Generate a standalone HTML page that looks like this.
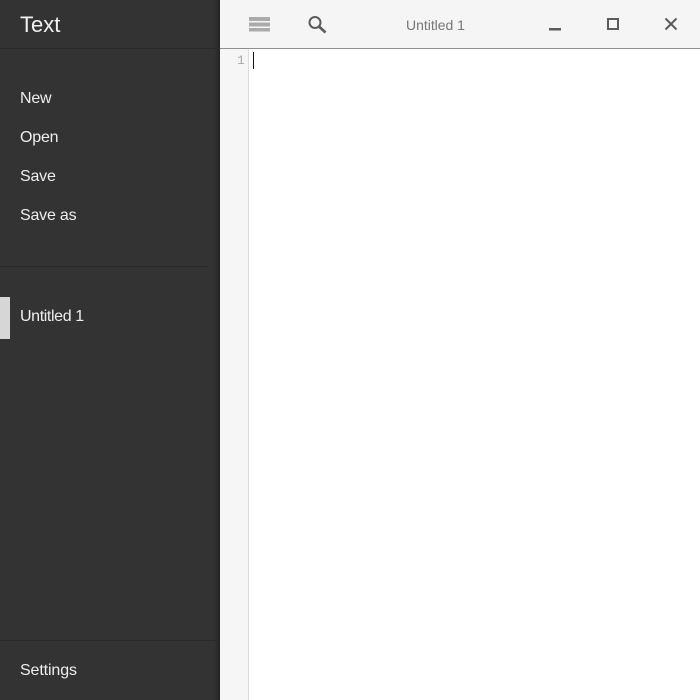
<!DOCTYPE html>
<html>
<head>
<meta charset="utf-8">
<style>
html,body{margin:0;padding:0;width:700px;height:700px;overflow:hidden;background:#fff;font-family:"Liberation Sans",Arial,sans-serif}
.a{position:absolute}
#side{left:0;top:0;width:220px;height:700px;background:#333}
#shadow{left:211px;top:0;width:9px;height:700px;background:linear-gradient(to right,rgba(0,0,0,0),rgba(0,0,0,.05) 50%,rgba(0,0,0,.34))}
.item{left:20px;color:#eee;font-size:16px;line-height:20px;white-space:nowrap;letter-spacing:-.2px}
.line{background:#2b2b2b;height:1px}
#top{left:220px;top:0;width:480px;height:48px;background:#f5f5f5;border-bottom:1px solid #8f8f8f}
#gut{left:220px;top:49px;width:28px;height:651px;background:#f6f6f6;border-right:1px solid #dcdcdc}
</style>
</head>
<body>
<div class="a" id="side"></div>
<div class="a" id="shadow"></div>
<div class="a line" style="left:0;top:48px;width:220px"></div>
<div class="a line" style="left:0;top:266px;width:208px"></div>
<div class="a line" style="left:0;top:640px;width:220px"></div>
<div class="a item" style="top:13px;font-size:22px;line-height:23px;color:#f0f0f0;letter-spacing:0">Text</div>
<div class="a item" style="top:89px">New</div>
<div class="a item" style="top:128px">Open</div>
<div class="a item" style="top:167px">Save</div>
<div class="a item" style="top:206px">Save as</div>
<div class="a" style="left:0;top:297px;width:10px;height:42px;background:#d6d6d6"></div>
<div class="a item" style="top:307px;letter-spacing:-.38px">Untitled 1</div>
<div class="a item" style="top:661px;letter-spacing:-.12px">Settings</div>
<div class="a" id="top"></div>
<div class="a" id="gut"></div>
<svg class="a" style="left:220px;top:0" width="480" height="48" viewBox="220 0 480 48">
<rect x="249" y="17" width="21" height="4" fill="#aaa"/>
<rect x="249" y="22.500" width="21" height="4" fill="#aaa"/>
<rect x="249" y="28" width="21" height="3.500" fill="#aaa"/>
<circle cx="315" cy="22.500" r="5.500" fill="none" stroke="#5c5c5c" stroke-width="2"/>
<path d="M319 26.500L325.500 32.500" stroke="#5c5c5c" stroke-width="2.800" fill="none"/>
<rect x="549" y="28" width="12" height="2.500" fill="#5c5c5c"/>
<rect x="608" y="19" width="10" height="10" fill="none" stroke="#5c5c5c" stroke-width="2"/>
<path d="M665.500 18.500L676.500 29.500M676.500 18.500L665.500 29.500" stroke="#5c5c5c" stroke-width="2" fill="none"/>
</svg>
<div class="a" style="left:406px;top:15px;color:#777;font-size:14px;line-height:20px;white-space:nowrap;letter-spacing:-.02px">Untitled 1</div>
<div class="a" style="left:237px;top:53px;color:#aaa;font-family:'Liberation Mono',monospace;font-size:13px;line-height:16px">1</div>
<div class="a" style="left:253px;top:52px;width:1px;height:17px;background:#111"></div>
</body>
</html>
